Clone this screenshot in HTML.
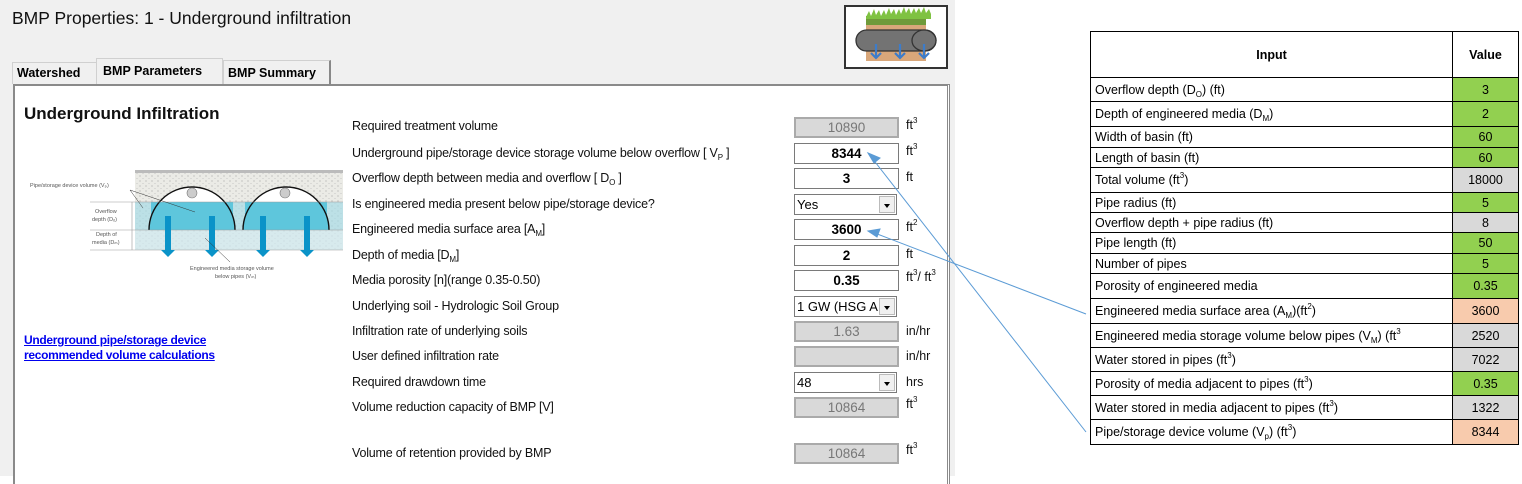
<!DOCTYPE html>
<html><head><meta charset="utf-8"><style>
*{margin:0;padding:0;box-sizing:border-box}
body{width:1522px;height:476px;background:#fff;position:relative;overflow:hidden;font-family:"Liberation Sans",Arial,sans-serif;}
.a{position:absolute}
#left{position:absolute;left:0;top:0;width:955px;height:476px;background:#f0f0f0}
.lbl{position:absolute;left:352px;font-size:12.5px;color:#111;letter-spacing:-0.2px;white-space:nowrap}
.box{position:absolute;left:794px;width:105px;height:21px;border:1px solid #7a7a7a;background:#fff;font-size:13.5px;font-weight:bold;text-align:center;line-height:19px;color:#000}
.box.g{background:#d9d9d9;color:#777;font-weight:normal;border-color:#aaa;border-width:2px;line-height:17px}
.sel{position:absolute;left:794px;width:103px;height:21px;border:1px solid #7a7a7a;background:#fff;font-size:13px;line-height:19px;padding-left:2px;color:#000;white-space:nowrap;overflow:hidden}
.sel i{position:absolute;right:1px;top:1px;width:16px;height:17px;background:#f0f0f0;border:1px solid #bbb}
.sel i:after{content:"";position:absolute;left:4px;top:7px;border-left:3.5px solid transparent;border-right:3.5px solid transparent;border-top:4px solid #000}
.u{position:absolute;left:906px;font-size:12.5px;color:#111}
sup{font-size:8px;vertical-align:baseline;position:relative;top:-6px;line-height:0}
sub{font-size:8px;vertical-align:baseline;position:relative;top:3px;line-height:0}
table{position:absolute;left:1090px;top:31px;border-collapse:collapse;font-family:"Liberation Sans",Calibri,sans-serif;font-size:12.5px;table-layout:fixed}
td{border:1px solid #000;padding:0 4px;white-space:nowrap;overflow:hidden;line-height:14px}
td.v{text-align:center;width:66px;padding:0}
.gr{background:#92d050}.gy{background:#d9d9d9}.or{background:#f8cbad}
</style></head><body>
<div id="left"></div>
<div class="a" style="left:12px;top:8px;font-size:17.5px;color:#111">BMP Properties: 1 - Underground infiltration</div>
<div class="a" style="left:844px;top:5px;width:104px;height:64px;border:2px solid #333;background:#fff"></div>
<svg class="a" style="left:846px;top:7px" width="100" height="60">
<rect x="20" y="9" width="60" height="9" fill="#6f9a3a"/>
<path d="M20 10 l3-6 2 5 3-7 2 6 3-5 2 6 3-6 2 5 3-7 2 6 3-5 2 6 3-6 2 5 3-7 2 6 3-5 2 6 3-6 2 5 3-5 2 5 3-6 2 6 3-4 2 5 V12 H20z" fill="#7fc242"/>
<rect x="20" y="18" width="60" height="36" fill="#d9a77a"/>
<rect x="10" y="23" width="80" height="21" rx="10.5" fill="#737373" stroke="#333" stroke-width="1.3"/>
<ellipse cx="78" cy="33.5" rx="12" ry="10.5" fill="#737373" stroke="#333" stroke-width="1.3"/>
<g stroke="#3d7cc9" stroke-width="2.2" fill="none"><path d="M30 37v14M25 46l5 5 5-5M54 37v14M49 46l5 5 5-5M78 37v14M73 46l5 5 5-5"/></g>
</svg>
<div class="a" style="left:12px;top:62px;width:85px;height:22px;border:1px solid #d0d0d0;border-bottom:none;background:#f0f0f0;font-size:12.5px;font-weight:bold;padding:3px 0 0 4px">Watershed</div>
<div class="a" style="left:96px;top:58px;width:127px;height:27px;border:1px solid #d0d0d0;border-bottom:none;background:#f0f0f0;font-size:12.5px;font-weight:bold;padding:5px 0 0 6px">BMP Parameters</div>
<div class="a" style="left:223px;top:60px;width:108px;height:24px;border:1px solid #d0d0d0;border-right:2px solid #888;border-bottom:none;background:#f0f0f0;font-size:12.5px;font-weight:bold;padding:5px 0 0 4px">BMP Summary</div>
<div class="a" style="left:13px;top:84px;width:937px;height:400px;border-top:2px solid #8a8a8a;border-left:2px solid #8a8a8a;border-right:3px double #8a8a8a;background:#fff"></div>
<div class="a" style="left:24px;top:104px;font-size:17px;font-weight:bold;color:#111">Underground Infiltration</div>
<svg class="a" style="left:25px;top:170px" width="320" height="120" font-family="Liberation Sans" font-size="5.5" fill="#555">
<defs><pattern id="dp" width="6" height="5" patternUnits="userSpaceOnUse"><rect width="6" height="5" fill="#ebebe6"/><circle cx="1" cy="1" r="0.6" fill="#aaa"/><circle cx="4" cy="3.5" r="0.5" fill="#bbb"/></pattern></defs>
<rect x="110" y="1" width="208" height="79" fill="url(#dp)"/>
<rect x="110" y="0" width="208" height="3" fill="#bbb"/>
<rect x="110" y="32" width="208" height="28" fill="#a8dbe6" opacity="0.7"/>
<rect x="110" y="60" width="208" height="20" fill="#cfe9ef" opacity="0.7"/>
<path d="M124 60 A43 43 0 0 1 210 60Z" fill="#fff"/>
<path d="M218 60 A43 43 0 0 1 304 60Z" fill="#fff"/>
<path d="M124 60 A43 43 0 0 1 131 36 L203 36 A43 43 0 0 1 210 60Z" fill="#5ec6dc"/>
<path d="M218 60 A43 43 0 0 1 225 36 L297 36 A43 43 0 0 1 304 60Z" fill="#5ec6dc"/>
<rect x="126" y="32" width="82" height="28" fill="#5ec6dc"/>
<rect x="220" y="32" width="82" height="28" fill="#5ec6dc"/>
<path d="M124 60 A43 43 0 0 1 210 60" stroke="#111" stroke-width="1.4" fill="none"/>
<path d="M218 60 A43 43 0 0 1 304 60" stroke="#111" stroke-width="1.4" fill="none"/>
<circle cx="167" cy="23" r="5" fill="#ccc" stroke="#777" stroke-width="0.6"/>
<circle cx="260" cy="23" r="5" fill="#ccc" stroke="#777" stroke-width="0.6"/>
<g stroke="#999" stroke-width="0.6"><line x1="65" y1="32" x2="318" y2="32"/><line x1="65" y1="60" x2="318" y2="60"/><line x1="65" y1="80" x2="318" y2="80"/><line x1="107" y1="32" x2="107" y2="80"/></g>
<g fill="#0a93c8"><rect x="140" y="46" width="6" height="34"/><path d="M136 80h14l-7 7z"/><rect x="184" y="46" width="6" height="34"/><path d="M180 80h14l-7 7z"/><rect x="235" y="46" width="6" height="34"/><path d="M231 80h14l-7 7z"/><rect x="279" y="46" width="6" height="34"/><path d="M275 80h14l-7 7z"/></g>
<text x="5" y="17">Pipe/storage device volume (Vₚ)</text>
<text x="70" y="43">Overflow</text><text x="67" y="51">depth (Dₒ)</text>
<text x="71" y="66">Depth of</text><text x="67" y="74">media (Dₘ)</text>
<text x="165" y="100">Engineered media storage volume</text><text x="190" y="108">below pipes (Vₘ)</text>
<path d="M105 20 L170 42 M105 20 L118 38" stroke="#333" stroke-width="0.5"/>
<path d="M205 92 L180 68" stroke="#333" stroke-width="0.5"/>
</svg>
<div class="a" style="left:24px;top:333px;font-size:12px;font-weight:bold;color:#0000ee;text-decoration:underline;line-height:15px;letter-spacing:-0.3px">Underground pipe/storage device<br>recommended volume calculations</div>
<div class="lbl" style="top:119px">Required treatment volume</div>
<div class="box g" style="top:117px">10890</div><div class="u" style="top:118px">ft<sup>3</sup></div>
<div class="lbl" style="top:146px">Underground pipe/storage device storage volume below overflow [ V<sub>P</sub> ]</div>
<div class="box" style="top:143px">8344</div><div class="u" style="top:144px">ft<sup>3</sup></div>
<div class="lbl" style="top:171px">Overflow depth between media and overflow [ D<sub>O</sub> ]</div>
<div class="box" style="top:168px">3</div><div class="u" style="top:170px">ft</div>
<div class="lbl" style="top:197px">Is engineered media present below pipe/storage device?</div>
<div class="sel" style="top:194px">Yes<i></i></div>
<div class="lbl" style="top:222px">Engineered media surface area [A<sub>M</sub>]</div>
<div class="box" style="top:219px">3600</div><div class="u" style="top:220px">ft<sup>2</sup></div>
<div class="lbl" style="top:248px">Depth of media [D<sub>M</sub>]</div>
<div class="box" style="top:245px">2</div><div class="u" style="top:247px">ft</div>
<div class="lbl" style="top:273px">Media porosity [n](range 0.35-0.50)</div>
<div class="box" style="top:270px">0.35</div><div class="u" style="top:270px">ft<sup>3</sup>/ ft<sup>3</sup></div>
<div class="lbl" style="top:299px">Underlying soil - Hydrologic Soil Group</div>
<div class="sel" style="top:296px">1 GW (HSG A,<i></i></div>
<div class="lbl" style="top:324px">Infiltration rate of underlying soils</div>
<div class="box g" style="top:321px">1.63</div><div class="u" style="top:324px">in/hr</div>
<div class="lbl" style="top:349px">User defined infiltration rate</div>
<div class="box g" style="top:346px"></div><div class="u" style="top:349px">in/hr</div>
<div class="lbl" style="top:375px">Required drawdown time</div>
<div class="sel" style="top:372px">48<i></i></div><div class="u" style="top:375px">hrs</div>
<div class="lbl" style="top:400px">Volume reduction capacity of BMP [V]</div>
<div class="box g" style="top:397px">10864</div><div class="u" style="top:397px">ft<sup>3</sup></div>
<div class="lbl" style="top:446px">Volume of retention provided by BMP</div>
<div class="box g" style="top:443px">10864</div><div class="u" style="top:443px">ft<sup>3</sup></div>
<table>
<colgroup><col style="width:362px"><col style="width:66px"></colgroup>
<tr style="height:46px"><td style="text-align:center;font-weight:bold">Input</td><td class="v" style="font-weight:bold">Value</td></tr>
<tr style="height:24px"><td>Overflow depth (D<sub>O</sub>) (ft)</td><td class="v gr">3</td></tr>
<tr style="height:25px"><td>Depth of engineered media (D<sub>M</sub>)</td><td class="v gr">2</td></tr>
<tr style="height:21px"><td>Width of basin (ft)</td><td class="v gr">60</td></tr>
<tr style="height:20px"><td>Length of basin (ft)</td><td class="v gr">60</td></tr>
<tr style="height:25px"><td>Total volume (ft<sup>3</sup>)</td><td class="v gy">18000</td></tr>
<tr style="height:20px"><td>Pipe radius (ft)</td><td class="v gr">5</td></tr>
<tr style="height:20px"><td>Overflow depth + pipe radius (ft)</td><td class="v gy">8</td></tr>
<tr style="height:21px"><td>Pipe length (ft)</td><td class="v gr">50</td></tr>
<tr style="height:20px"><td>Number of pipes</td><td class="v gr">5</td></tr>
<tr style="height:25px"><td>Porosity of engineered media</td><td class="v gr">0.35</td></tr>
<tr style="height:25px"><td>Engineered media surface area (A<sub>M</sub>)(ft<sup>2</sup>)</td><td class="v or">3600</td></tr>
<tr style="height:24px"><td>Engineered media storage volume below pipes (V<sub>M</sub>) (ft<sup>3</sup></td><td class="v gy">2520</td></tr>
<tr style="height:24px"><td>Water stored in pipes (ft<sup>3</sup>)</td><td class="v gy">7022</td></tr>
<tr style="height:24px"><td>Porosity of media adjacent to pipes (ft<sup>3</sup>)</td><td class="v gr">0.35</td></tr>
<tr style="height:24px"><td>Water stored in media adjacent to pipes (ft<sup>3</sup>)</td><td class="v gy">1322</td></tr>
<tr style="height:25px"><td>Pipe/storage device volume (V<sub>p</sub>) (ft<sup>3</sup>)</td><td class="v or">8344</td></tr>
</table>
<svg class="a" style="left:0;top:0" width="1522" height="476">
<g stroke="#5b9bd5" stroke-width="1" fill="#5b9bd5">
<line x1="872" y1="158" x2="1086" y2="432"/>
<line x1="872" y1="232" x2="1086" y2="314"/>
<path d="M868 153 l12 5 -6 5z"/>
<path d="M868 231 l12 -2 -3 8z"/>
</g>
</svg>
</body></html>
